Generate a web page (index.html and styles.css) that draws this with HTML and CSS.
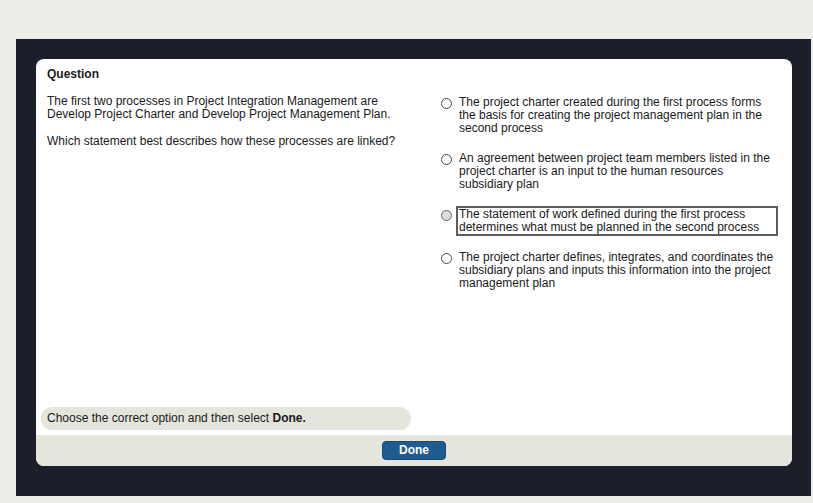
FILE: index.html
```html
<!DOCTYPE html>
<html>
<head>
<meta charset="utf-8">
<link rel="stylesheet" href="styles.css">
</head>
<body>
<div class="stage">
  <div class="card">
    <div class="card-body">
      <div class="title">Question</div>
      <div class="content">
        <div class="stem">
          <p>The first two processes in Project Integration Management are Develop Project Charter and Develop Project Management Plan.</p>
          <p>Which statement best describes how these processes are linked?</p>
        </div>
        <div class="options">
          <div class="option"><span class="radio"></span><span class="label">The project charter created during the first process forms the basis for creating the project management plan in the second process</span></div>
          <div class="option"><span class="radio"></span><span class="label">An agreement between project team members listed in the project charter is an input to the human resources subsidiary plan</span></div>
          <div class="option focused"><span class="radio hover"></span><span class="label">The statement of work defined during the first process determines what must be planned in the second process</span></div>
          <div class="option"><span class="radio"></span><span class="label">The project charter defines, integrates, and coordinates the subsidiary plans and inputs this information into the project management plan</span></div>
        </div>
      </div>
      <div class="instructions">Choose the correct option and then select <b>Done.</b></div>
    </div>
    <div class="footer"><button class="done">Done</button></div>
  </div>
</div>
</body>
</html>
```
FILE: styles.css
```css
html, body {
  margin: 0;
  padding: 0;
  background: #eeeee9;
  font-family: "Liberation Sans", Arial, sans-serif;
  font-size: 12px;
  color: #1a1a1a;
}
.stage {
  margin: 39px 2px 0 16px;
  height: 457px;
  box-sizing: border-box;
  background: #1c1f2a;
  padding: 20px 19px 30px 20px;
}
.card {
  height: 407px;
  background: #fff;
  border-radius: 8px;
  overflow: hidden;
  display: flex;
  flex-direction: column;
}
.card-body {
  flex: 1;
  display: flex;
  flex-direction: column;
  padding: 8px 5px 5px 5px;
}
.title {
  font-weight: bold;
  line-height: 14px;
  padding-left: 6px;
}
.content {
  flex: 1;
  display: grid;
  grid-template-columns: 399px 1fr;
  padding-top: 14px;
}
.stem {
  padding-left: 6px;
  width: 360px;
}
.stem p {
  margin: 0 0 14px 0;
  line-height: 13px;
}
.options {
  display: flex;
  flex-direction: column;
  gap: 15px;
  padding-top: 1px;
}
.option {
  display: flex;
  align-items: flex-start;
  gap: 6px;
}
.radio {
  flex: none;
  width: 9px;
  height: 9px;
  border: 1px solid #4a4a4a;
  border-radius: 50%;
  background: #fff;
  margin-top: 2px;
  margin-left: 1px;
}
.radio.hover {
  background: #dcdcdc;
  border-color: #666;
}
.label {
  line-height: 13px;
  width: 318px;
  padding: 1px 2px;
  border: 1px solid transparent;
  margin: -2px 0 0 -2px;
}
.option.focused .label {
  border: 2px solid #5c5c5c;
  padding: 0 1px;
  width: 316px;
}
.instructions {
  align-self: flex-start;
  width: 364px;
  height: 23px;
  line-height: 23px;
  padding-left: 6px;
  background: #e4e5dd;
  border-radius: 12px;
}
.footer {
  height: 31px;
  background: #e4e5dd;
  display: flex;
  justify-content: center;
  align-items: flex-start;
  padding-top: 6px;
  box-sizing: border-box;
}
.done {
  width: 64px;
  height: 19px;
  padding: 0;
  border: 1px solid #174a75;
  border-radius: 4px;
  background: #1e5b8e;
  color: #fff;
  font-family: "Liberation Sans", Arial, sans-serif;
  font-weight: bold;
  font-size: 12px;
  line-height: 17px;
}
```
